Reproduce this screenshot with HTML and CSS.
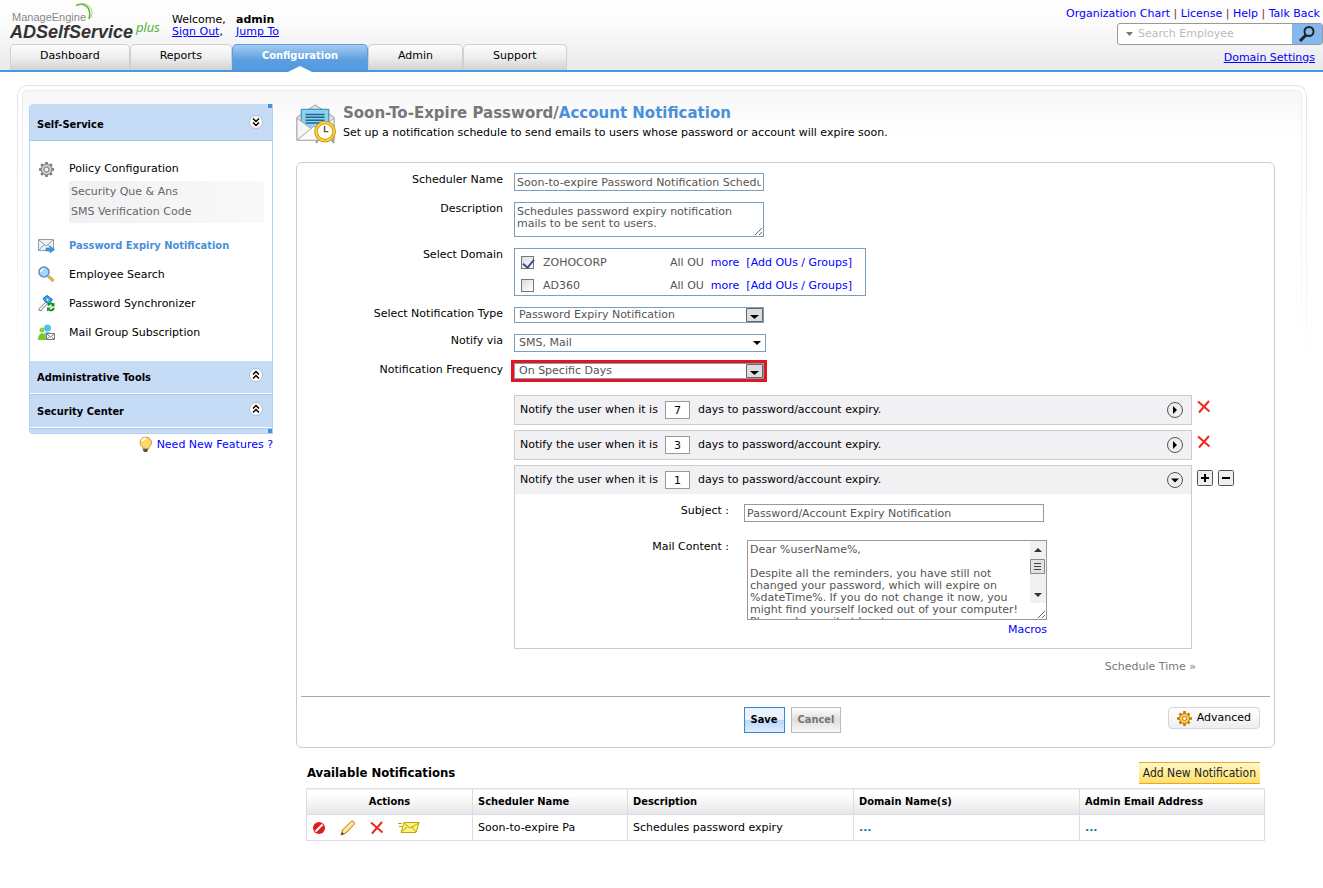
FILE: index.html
```html
<!DOCTYPE html>
<html lang="en">
<head>
    <meta charset="UTF-8">
    <meta name="viewport" content="width=device-width, initial-scale=1.0">
    <title>ADSelfService Plus</title>
    <link rel="stylesheet" href="styles.css">
</head>
<body>
    <header class="header">
        <div class="header-left">
            <div class="brand-row">
                <div class="logo">
                    <svg class="logo-swoosh" width="20" height="18" viewBox="0 0 20 18" fill="none" stroke="#5cb531"><path d="M1 2.500C9-1 17 4 14 16" stroke-width="1.500"/><path d="M5 1C13-1 20 6 15.500 15" stroke="#9bd37c"/></svg>
                    <span class="logo-company">ManageEngine</span>
                    <span class="logo-product">ADSelfService</span>
                    <span class="logo-plus">plus</span>
                </div>
                <div class="welcome">
                    <span>Welcome,</span><b>admin</b>
                    <span><a href="#">Sign Out</a>,</span><a href="#">Jump To</a>
                </div>
            </div>
            <nav class="tabs">
                <a class="tab" href="#">Dashboard</a>
                <a class="tab" href="#">Reports</a>
                <a class="tab active" href="#">Configuration</a>
                <a class="tab" href="#">Admin</a>
                <a class="tab" href="#">Support</a>
            </nav>
        </div>
        <div class="header-right">
            <div class="top-links">
                <a href="#">Organization Chart</a> | <a href="#">License</a> | <a href="#">Help</a> | <a href="#">Talk Back</a>
            </div>
            <form class="search">
                <svg width="7" height="5" viewBox="0 0 7 5"><path d="M0 0h7L3.500 4z" fill="#777"/></svg>
                <input type="text" placeholder="Search Employee" aria-label="Search Employee">
                <button type="button" aria-label="Search">
                    <svg width="18" height="18" viewBox="0 0 18 18" fill="none" stroke="#222"><circle cx="11" cy="6.500" r="4.500" stroke-width="2"/><path d="M8 10L2 16" stroke-width="3"/></svg>
                </button>
            </form>
            <a class="domain-settings" href="#">Domain Settings</a>
        </div>
    </header>

    <div class="shell">
        <aside class="sidebar">
            <div class="side-box">
                <div class="side-head first">Self-Service
                    <button class="round-toggle" aria-label="Collapse"><svg width="14" height="14" viewBox="0 0 14 14"><circle cx="7" cy="7" r="6.500" fill="#fff" stroke="#b5bcc5"/><path d="M4 3.500l3 3 3-3M4 7.500l3 3 3-3" fill="none" stroke="#000" stroke-width="1.500"/></svg></button>
                </div>
                <div class="side-body">
                    <a class="side-item policy" href="#">
                        <svg width="17" height="17" viewBox="0 0 17 17"><path d="M8.500 1v15M1 8.500h15M3.200 3.200l10.600 10.600M13.800 3.200L3.200 13.800" stroke="#777" stroke-width="2.500"/><circle cx="8.500" cy="8.500" r="5.500" fill="#ccc" stroke="#777"/><circle cx="8.500" cy="8.500" r="2.500" fill="#eee" stroke="#777"/></svg>
                        Policy Configuration
                    </a>
                    <div class="side-sub">
                        <a href="#">Security Que &amp; Ans</a>
                        <a href="#">SMS Verification Code</a>
                    </div>
                    <a class="side-item selected" href="#">
                        <svg width="17" height="17" viewBox="0 0 17 17"><path d="M.5 2.500h15v11H.5z" fill="#edf1f5" stroke="#8d9dac"/><path d="M1 3l7 6 7-6M1 13l5-5M15 13l-5-5" fill="none" stroke="#8d9dac"/><path d="M8 11h4V9l4.500 3.500L12 16v-2H8z" fill="#3f9be0" stroke="#276fb0" stroke-width=".5"/></svg>
                        Password Expiry Notification
                    </a>
                    <a class="side-item" href="#">
                        <svg width="17" height="17" viewBox="0 0 17 17"><path d="M10 10l5.500 5" stroke="#d98b2c" stroke-width="3"/><path d="M10 10l5.500 5" stroke="#ffd27a"/><circle cx="6" cy="6" r="5" fill="#a8d4f7" stroke="#5a8fc4" stroke-width="1.500"/><path d="M3 6c0-2 1.500-3 3-3" fill="none" stroke="#fff" stroke-width="1.500"/></svg>
                        Employee Search
                    </a>
                    <a class="side-item" href="#">
                        <svg width="17" height="17" viewBox="0 0 17 17"><path d="M8 7l-7 6.500v2h2.500l1-2 5-4.500" fill="#eee" stroke="#888"/><path d="M5 3.500L9 .5l5.500 4L11 9 7.500 7z" fill="#39a4e2" stroke="#1a6da8"/><path d="M8.500 3l2.500 2-2 1z" fill="#fff"/><path d="M10 10.500c1.500-3 4.500-2.500 5.500-.5M16 13c-1.500 3-4.500 3-6 1" fill="none" stroke="#14901f" stroke-width="2"/><path d="M16.500 7.500v4h-4zM9 12.500h4l-4 4z" fill="#14901f"/></svg>
                        Password Synchronizer
                    </a>
                    <a class="side-item" href="#">
                        <svg width="17" height="17" viewBox="0 0 17 17"><circle cx="9.500" cy="4" r="3.500" fill="#56bfe6"/><path d="M5 13c0-7 9-7 9 0z" fill="#71cdef"/><circle cx="4" cy="6" r="2.500" fill="#8bd038"/><path d="M0 16c0-9 8-9 8 0z" fill="#7cc62c"/><path d="M8.500 9.500h8v6h-8z" fill="#fff" stroke="#777"/><path d="M9 10l3.500 3 3.500-3M9 15l2.500-2M16 15l-2.500-2" fill="none" stroke="#777"/></svg>
                        Mail Group Subscription
                    </a>
                </div>
                <div class="side-head">Administrative Tools
                    <button class="round-toggle" aria-label="Expand"><svg width="14" height="14" viewBox="0 0 14 14"><circle cx="7" cy="7" r="6.500" fill="#fff" stroke="#b5bcc5"/><path d="M4 6.500l3-3 3 3M4 10.500l3-3 3 3" fill="none" stroke="#000" stroke-width="1.500"/></svg></button>
                </div>
                <div class="side-head">Security Center
                    <button class="round-toggle" aria-label="Expand"><svg width="14" height="14" viewBox="0 0 14 14"><circle cx="7" cy="7" r="6.500" fill="#fff" stroke="#b5bcc5"/><path d="M4 6.500l3-3 3 3M4 10.500l3-3 3 3" fill="none" stroke="#000" stroke-width="1.500"/></svg></button>
                </div>
                <div class="side-foot"></div>
            </div>
            <a class="need-features" href="#">
                <svg width="15" height="17" viewBox="0 0 15 17"><path d="M7.500 1a6 5.500 0 0 1 3.500 10v1.500H4.500V11A6 5.500 0 0 1 7.500 1z" fill="#ffd768" stroke="#d69a3a"/><path d="M4 5c1-2 2-2.500 4-2.500" fill="none" stroke="#fff" stroke-width="2"/><path d="M5 13h5v1l-1 2H6l-1-2z" fill="#555"/></svg>
                Need New Features ?
            </a>
        </aside>

        <main class="main">
            <div class="page-title">
                <svg width="40" height="40" viewBox="0 0 42 42">
                    <path d="M1 14L20 1l20 13v24H1z" fill="#e4e4e6" stroke="#999"/>
                    <path d="M5.500 5.500h29v24h-29z" fill="#8fd0f2" stroke="#2e80ad"/>
                    <path d="M10 11h20M10 14h20M10 17h20M10 20h17" stroke="#1f6793" stroke-width="1.500"/>
                    <path d="M1 15l15 11L1 38zM40 15L25 26l15 12z" fill="#f5f5f6" stroke="#aaa"/>
                    <path d="M1 38l17-14h5l17 14z" fill="#fbfbfb" stroke="#aaa"/>
                    <circle cx="30.500" cy="29" r="9.500" fill="#fffdf4" stroke="#b88a12" stroke-width="3.500"/>
                    <circle cx="30.500" cy="29" r="9.500" fill="none" stroke="#ffd52e" stroke-width="2"/>
                    <path d="M30 23v6h4" fill="none" stroke="#555" stroke-width="1.500"/>
                    <path d="M23 38l-2 3M38 38l2 3" stroke="#999" stroke-width="2"/>
                </svg>
                <div>
                    <h1>Soon-To-Expire Password/<span>Account Notification</span></h1>
                    <p>Set up a notification schedule to send emails to users whose password or account will expire soon.</p>
                </div>
            </div>

            <form class="panel">
                <div class="fields">
                    <label for="name">Scheduler Name</label>
                    <input class="field" id="name" type="text" value="Soon-to-expire Password Notification Scheduler">

                    <label for="desc">Description</label>
                    <textarea class="field desc" id="desc">Schedules password expiry notification mails to be sent to users.</textarea>

                    <span class="label">Select Domain</span>
                    <div class="domains">
                        <div class="domain">
                            <input type="checkbox" id="zoho" checked><label for="zoho">ZOHOCORP</label>
                            <span>All OU</span><a href="#">more</a><a href="#">[Add OUs / Groups]</a>
                        </div>
                        <div class="domain">
                            <input type="checkbox" id="ad360"><label for="ad360">AD360</label>
                            <span>All OU</span><a href="#">more</a><a href="#">[Add OUs / Groups]</a>
                        </div>
                    </div>

                    <label for="type">Select Notification Type</label>
                    <div class="select">
                        <select id="type"><option>Password Expiry Notification</option></select>
                        <svg width="17" height="14" viewBox="0 0 17 14"><path d="M.5.5h16v13H.5z" fill="#ddd" stroke="#666"/><path d="M4 7h9l-4.500 4z"/></svg>
                    </div>

                    <label for="via">Notify via</label>
                    <div class="select via">
                        <select id="via"><option>SMS, Mail</option></select>
                        <svg width="15" height="16" viewBox="0 0 15 16"><path d="M3 6h8l-4 4z"/></svg>
                    </div>

                    <label for="freq">Notification Frequency</label>
                    <div class="select marked">
                        <select id="freq"><option>On Specific Days</option></select>
                        <svg width="17" height="14" viewBox="0 0 17 14"><path d="M.5.5h16v13H.5z" fill="#ddd" stroke="#666"/><path d="M4 7h9l-4.500 4z"/></svg>
                    </div>
                </div>

                <div class="rules">
                    <div class="rule">
                        <div class="rule-head">
                            <label for="d7">Notify the user when it is</label><input id="d7" type="text" value="7"><span>days to password/account expiry.</span>
                            <button type="button" aria-label="Expand"><svg width="16" height="16" viewBox="0 0 16 16"><circle cx="8" cy="8" r="7.500" fill="#eee" stroke="#555"/><path d="M6 4v8l4-4z"/></svg></button>
                        </div>
                        <div class="rule-actions">
                            <button type="button" aria-label="Delete"><svg width="14" height="14" viewBox="0 0 14 14"><path d="M1 1.500l11.500 10M12 1L2 12.500" stroke="#ee2a20" stroke-width="2"/></svg></button>
                        </div>
                    </div>
                    <div class="rule">
                        <div class="rule-head">
                            <label for="d3">Notify the user when it is</label><input id="d3" type="text" value="3"><span>days to password/account expiry.</span>
                            <button type="button" aria-label="Expand"><svg width="16" height="16" viewBox="0 0 16 16"><circle cx="8" cy="8" r="7.500" fill="#eee" stroke="#555"/><path d="M6 4v8l4-4z"/></svg></button>
                        </div>
                        <div class="rule-actions">
                            <button type="button" aria-label="Delete"><svg width="14" height="14" viewBox="0 0 14 14"><path d="M1 1.500l11.500 10M12 1L2 12.500" stroke="#ee2a20" stroke-width="2"/></svg></button>
                        </div>
                    </div>
                    <div class="rule">
                        <div class="rule-open">
                            <div class="rule-head">
                                <label for="d1">Notify the user when it is</label><input id="d1" type="text" value="1"><span>days to password/account expiry.</span>
                                <button type="button" aria-label="Collapse"><svg width="16" height="16" viewBox="0 0 16 16"><circle cx="8" cy="8" r="7.500" fill="#eee" stroke="#555"/><path d="M4 6.500h8l-4 4z"/></svg></button>
                            </div>
                            <div class="mail">
                                <label for="subject">Subject :</label>
                                <input class="field" id="subject" type="text" value="Password/Account Expiry Notification">
                                <label for="content">Mail Content :</label>
                                <div class="mail-content">
                                    <div class="mail-text">
                                        <textarea class="field" id="content">Dear %userName%,

Despite all the reminders, you have still not changed your password, which will expire on %dateTime%. If you do not change it now, you might find yourself locked out of your computer!
Please change it at least now.</textarea>
                                        <svg class="scrollbar" width="16" height="62" viewBox="0 0 16 62"><path d="M0 0h16v62H0z" fill="#f0f0f3"/><path d="M4 11h8l-4-4zM4 52h8l-4 4z" fill="#333"/><path d="M.5 18.500h14v14H.5z" fill="#e2e2e4" stroke="#888"/><path d="M4 22.500h7M4 25.500h7M4 28.500h7" stroke="#444"/></svg>
                                    </div>
                                    <a href="#">Macros</a>
                                </div>
                            </div>
                        </div>
                        <div class="rule-actions">
                            <button type="button" aria-label="Add"><svg width="16" height="16" viewBox="0 0 16 16"><rect x=".5" y=".5" width="15" height="15" rx="1" fill="#eee" stroke="#555"/><path d="M4 8h8M8 4v8" stroke="#000" stroke-width="2"/></svg></button>
                            <button type="button" aria-label="Remove"><svg width="16" height="16" viewBox="0 0 16 16"><rect x=".5" y=".5" width="15" height="15" rx="1" fill="#eee" stroke="#555"/><path d="M4 8h8" stroke="#000" stroke-width="2"/></svg></button>
                        </div>
                    </div>
                </div>
                <a class="schedule-time" href="#">Schedule Time »</a>

                <div class="panel-foot">
                    <div class="buttons">
                        <button class="btn save" type="button">Save</button>
                        <button class="btn" type="button">Cancel</button>
                    </div>
                    <button class="advanced" type="button">
                        <svg width="15" height="15" viewBox="0 0 15 15"><path d="M7.500 0v15M0 7.500h15M2.500 2.500l10 10M12.500 2.500l-10 10" stroke="#b8780e" stroke-width="2.500"/><circle cx="7.500" cy="7.500" r="5" fill="#ffcf4a" stroke="#b8780e"/><circle cx="7.500" cy="7.500" r="2" fill="#fff" stroke="#b8780e"/></svg>
                        Advanced
                    </button>
                </div>
            </form>

            <section class="available">
                <div class="available-head">
                    <h2>Available Notifications</h2>
                    <button class="add-new">Add New Notification</button>
                </div>
                <table>
                    <thead>
                        <tr>
                            <th class="col-actions">Actions</th>
                            <th class="col-name">Scheduler Name</th>
                            <th class="col-wide">Description</th>
                            <th class="col-wide">Domain Name(s)</th>
                            <th>Admin Email Address</th>
                        </tr>
                    </thead>
                    <tbody>
                        <tr>
                            <td>
                                <div class="row-actions">
                                    <button aria-label="Disable"><svg width="14" height="14" viewBox="0 0 14 14"><circle cx="7" cy="7" r="6" fill="#e01b1b"/><path d="M3.500 10.500l7-7" stroke="#fff" stroke-width="2"/></svg></button>
                                    <button aria-label="Edit"><svg width="16" height="16" viewBox="0 0 16 16"><path d="M1 15l1.500-5L11 1.500c2-1.500 4.500 1 3 3L6 13z" fill="#ffdf80" stroke="#a87a2a"/><path d="M4 11l8-8" stroke="#fff6c8"/><path d="M1 15l1-3 2 2z" fill="#444"/></svg></button>
                                    <button aria-label="Delete"><svg width="14" height="14" viewBox="0 0 14 14"><path d="M1 1.500l11.500 10M12 1L2 12.500" stroke="#ee2a20" stroke-width="2"/></svg></button>
                                    <button aria-label="Send mail"><svg width="22" height="13" viewBox="0 0 22 13"><path d="M6 1.500h15l-3 10H3z" fill="#fff27c" stroke="#b7a700"/><path d="M6 2l6 5 9-5M3 11l6-5M18 11l-4-5" fill="none" stroke="#b7a700"/><path d="M0 2.500h4M1 5.500h3" stroke="#b7a700"/></svg></button>
                                </div>
                            </td>
                            <td>Soon-to-expire Pa</td>
                            <td>Schedules password expiry</td>
                            <td><a href="#">...</a></td>
                            <td><a href="#">...</a></td>
                        </tr>
                    </tbody>
                </table>
            </section>
        </main>
    </div>
</body>
</html>
```
FILE: styles.css
```css
* {
    box-sizing: border-box;
}
body {
    margin: 0;
    font-family: "DejaVu Sans", Verdana, sans-serif;
    font-size: 11px;
    line-height: 14px;
    color: #000;
    background-color: #fff;
}
a {
    color: #0000ff;
    text-decoration: none;
}
input, select, textarea, button {
    font: inherit;
    color: #555;
    margin: 0;
}
button {
    padding: 0;
    border: none;
    background: none;
    cursor: pointer;
}
svg {
    display: block;
    flex: none;
}

/* header */
.header {
    display: flex;
    justify-content: space-between;
    height: 72px;
    border-bottom: 2px solid #4a97dd;
    background: linear-gradient(#fff, #fafafb 40%, #e9e9eb);
}
.header-left {
    display: flex;
    flex-direction: column;
    justify-content: space-between;
    padding-left: 10px;
}
.brand-row {
    display: flex;
    gap: 13px;
}
.logo {
    position: relative;
    display: grid;
    grid-template-columns: auto 1fr;
    align-items: end;
    width: 149px;
    padding-top: 10px;
    font-family: "Liberation Sans", Arial, sans-serif;
}
.logo-swoosh {
    position: absolute;
    left: 65px;
    top: 3px;
}
.logo-company {
    grid-column: 1 / 3;
    padding-left: 2px;
    color: #888;
}
.logo-product {
    font-size: 18px;
    line-height: 16px;
    font-weight: bold;
    font-style: italic;
    color: #333;
}
.logo-plus {
    font-family: "Open Sans", sans-serif;
    font-style: italic;
    font-size: 13px;
    line-height: 26px;
    margin-top: -10px;
    padding-left: 3px;
    color: #4cae2c;
}
.welcome {
    display: grid;
    grid-template-columns: 64px auto;
    align-content: start;
    line-height: 12px;
    padding-top: 14px;
}
.welcome a {
    text-decoration: underline;
}
.tabs {
    display: flex;
}
.tab {
    height: 26px;
    padding: 0 29px;
    line-height: 22px;
    color: #000;
    border: 1px solid #d0d0d2;
    border-bottom: none;
    border-radius: 5px 5px 0 0;
    background: linear-gradient(#fdfdfd, #eee 50%, #d2d2d4);
}
.tab.active {
    position: relative;
    color: #fff;
    font-family: "DejaVu Sans Condensed", "DejaVu Sans", sans-serif;
    font-weight: bold;
    border-color: #5b9fe0;
    background: linear-gradient(#a5cbf0, #5b9fe0 60%, #5499de);
}
.tab.active::after {
    content: "";
    position: absolute;
    left: 50%;
    bottom: -2px;
    margin-left: -12px;
    border: 12px solid transparent;
    border-top: none;
    border-bottom: 6px solid #fff;
}
.header-right {
    display: flex;
    flex-direction: column;
    align-items: flex-end;
    padding-top: 7px;
}
.top-links {
    padding-right: 3px;
    color: #733;
}
.search {
    display: flex;
    align-items: center;
    width: 206px;
    height: 22px;
    margin-top: 2px;
    padding-left: 8px;
    border: 1px solid #999;
    border-radius: 3px;
    background-color: #fff;
}
.search input {
    flex: 1;
    min-width: 0;
    padding: 0 5px;
    border: none;
    outline: none;
}
.search input::placeholder {
    color: #bbb;
}
.search button {
    display: flex;
    align-items: center;
    justify-content: center;
    width: 30px;
    height: 20px;
    background-color: #85b8ee;
}
.domain-settings {
    margin: 6px 8px 0 0;
    text-decoration: underline;
}

/* page frame, fades out towards the bottom */
.shell {
    position: relative;
    display: flex;
    align-items: flex-start;
    gap: 23px;
    margin: 13px 16px 0 17px;
    padding: 19px 32px 40px 12px;
}
.shell::before {
    content: "";
    position: absolute;
    inset: 0 0 auto 0;
    height: 300px;
    z-index: -1;
    border: 1px solid #e2e2e8;
    border-bottom: none;
    border-radius: 10px 10px 0 0;
    box-shadow: inset 0 0 0 4px #fff, inset 0 0 0 5px #ececf0;
    background: linear-gradient(#f6f6f8, #fff 50px);
    mask-image: linear-gradient(#000, transparent);
}

/* sidebar */
.sidebar {
    width: 244px;
    flex: none;
}
.side-box {
    border: 1px solid #b3d0f0;
    border-radius: 4px 0 0 4px;
    border-top: none;
    background-color: #fff;
}
.side-head {
    display: flex;
    justify-content: space-between;
    height: 34px;
    padding: 10px 9px 0 7px;
    font-family: "DejaVu Sans Condensed", "DejaVu Sans", sans-serif;
    font-weight: bold;
    background-color: #c6dcf6;
    border-bottom: 1px solid #a5cbe8;
    box-shadow: inset 0 -1px #fff;
}
.side-head.first {
    height: 37px;
    padding-top: 14px;
    border-radius: 4px 0 0 0;
    background: linear-gradient(#4a90d9, #4a90d9) top right / 4px 4px no-repeat #c6dcf6;
    box-shadow: none;
}
.round-toggle {
    height: 14px;
    margin-top: -3px;
}
.side-body {
    padding: 16px 8px 14px;
}
.side-item {
    display: flex;
    align-items: center;
    gap: 14px;
    height: 29px;
    color: #000;
}
.side-item.policy {
    height: 24px;
}
.side-item.selected {
    margin-top: 8px;
    color: #4a90d9;
    font-family: "DejaVu Sans Condensed", "DejaVu Sans", sans-serif;
    font-weight: bold;
}
.side-sub {
    display: flex;
    flex-direction: column;
    margin-left: 31px;
    padding: 1px 2px;
    line-height: 20px;
    background: linear-gradient(90deg, #f1f1f3, #f9f9fa);
}
.side-sub a {
    color: #666;
}
.side-foot {
    height: 4px;
    background: linear-gradient(#4a90d9, #4a90d9) right / 4px 4px no-repeat #c6dcf6;
}
.need-features {
    display: flex;
    align-items: center;
    justify-content: flex-end;
    gap: 4px;
    padding-top: 2px;
}

/* page title */
.main {
    flex: 1;
    min-width: 0;
}
.page-title {
    display: flex;
    gap: 7px;
    height: 58px;
}
h1 {
    margin: 0;
    font-size: 15px;
    line-height: 18px;
    color: #777;
}
h1 span {
    color: #4a90d9;
}
.page-title p {
    margin: 4px 0 0;
}

/* form */
.panel {
    display: flex;
    flex-direction: column;
    padding: 10px 4px 14px;
    border: 1px solid #ccc;
    border-radius: 6px;
    background-color: #fff;
}
.fields {
    display: grid;
    grid-template-columns: 202px auto;
    justify-content: start;
    gap: 11px;
}
.fields > label, .fields > .label {
    text-align: right;
}
.field {
    width: 250px;
    height: 18px;
    padding: 0 2px;
    border: 1px solid #7b9ebd;
    border-radius: 0;
    background-color: #fff;
}
textarea.field {
    display: block;
    height: 35px;
    padding: 3px 2px;
    line-height: 12px;
    overflow: hidden;
}
.domains {
    width: 352px;
    height: 48px;
    padding: 2px 6px 0;
    border: 1px solid #7b9ebd;
}
.domain {
    display: flex;
    align-items: center;
    gap: 7px;
    height: 23px;
    color: #555;
}
.domain label {
    width: 120px;
    margin-left: 2px;
}
.domain input {
    width: 13px;
    height: 13px;
    appearance: none;
    border: 1px solid #777;
    background: linear-gradient(135deg, #ddd, #fff);
}
.domain input:checked::before {
    content: "";
    display: block;
    width: 5px;
    height: 9px;
    margin-left: 3px;
    border: solid #3c4f8c;
    border-width: 0 2px 2px 0;
    transform: rotate(40deg);
}
.select {
    position: relative;
    width: 250px;
    height: 16px;
}
.select select {
    display: block;
    width: 100%;
    height: 100%;
    padding: 0 4px;
    appearance: none;
    border: 1px solid #7b9ebd;
    border-radius: 0;
    background-color: #fff;
}
.select svg {
    position: absolute;
    top: 1px;
    right: 1px;
    pointer-events: none;
}
.select.via {
    width: 252px;
    height: 18px;
}
.select.marked {
    outline: 3px solid #e8141c;
}

/* notification rules */
.rules {
    display: flex;
    flex-direction: column;
    gap: 5px;
    margin: 16px 0 0 213px;
}
.rule {
    display: flex;
}
.rule-head {
    flex: 1;
    display: flex;
    align-items: center;
    height: 30px;
    padding: 0 8px 0 5px;
    border: 1px solid #ccc;
    background-color: #f1f1f4;
}
.rule-head input {
    width: 25px;
    height: 18px;
    margin: 0 8px 0 7px;
    padding: 0;
    text-align: center;
    color: #000;
    border: 1px solid #999;
    background-color: #fff;
}
.rule-head button {
    margin-left: auto;
}
.rule-open {
    flex: 1;
    border: 1px solid #ccc;
}
.rule-open .rule-head {
    height: 28px;
    border: none;
}
.rule-actions {
    display: flex;
    align-items: flex-start;
    gap: 5px;
    width: 78px;
    padding: 5px 0 0 5px;
}
.mail {
    display: grid;
    grid-template-columns: 214px auto;
    justify-content: start;
    gap: 18px 15px;
    padding: 10px 0 11px;
}
.mail > label {
    text-align: right;
}
.mail .field {
    width: 300px;
    border-color: #999;
}
.mail-content {
    display: flex;
    flex-direction: column;
    align-items: flex-end;
    gap: 3px;
    padding-left: 3px;
}
.mail-text {
    position: relative;
}
.mail-text textarea.field {
    height: 80px;
    padding-right: 18px;
}
.scrollbar {
    position: absolute;
    top: 1px;
    right: 1px;
}
.schedule-time {
    align-self: flex-end;
    margin: 11px 74px 22px 0;
    color: #777;
}
.panel-foot {
    display: grid;
    grid-template-columns: 1fr auto 1fr;
    align-items: start;
    padding: 10px 10px 0 24px;
    border-top: 1px solid #aaa;
}
.buttons {
    grid-column: 2;
    display: flex;
    gap: 6px;
}
.btn {
    height: 26px;
    padding: 0 6px;
    font-family: "DejaVu Sans Condensed", "DejaVu Sans", sans-serif;
    font-weight: bold;
    color: #777;
    border: 1px solid #bbb;
    background: linear-gradient(#fff, #dedee0 50%, #f8f8f8);
}
.btn.save {
    color: #000;
    border-color: #3b86d0;
    background: linear-gradient(#e8f3ff 50%, #b9d7f7 50%, #dcecff);
}
.advanced {
    display: flex;
    align-items: center;
    justify-self: end;
    gap: 5px;
    height: 22px;
    padding: 0 8px;
    color: #000;
    border: 1px solid #d5d5d8;
    border-radius: 4px;
    background: linear-gradient(#fff, #eeeef0);
}

/* list of saved notifications */
.available {
    padding: 14px 10px 0;
}
.available-head {
    display: flex;
    align-items: flex-start;
    justify-content: space-between;
    height: 26px;
    padding: 0 5px 0 1px;
}
h2 {
    margin: 4px 0 0;
    font-size: 13px;
    line-height: 14px;
    font-family: "DejaVu Sans Condensed", "DejaVu Sans", sans-serif;
}
.add-new {
    height: 22px;
    padding: 0 4px;
    color: #222;
    font-family: "DejaVu Sans Condensed", "DejaVu Sans", sans-serif;
    font-size: 12px;
    border: solid #e8a52c;
    border-width: 1px 0;
    background: linear-gradient(#fff8c8, #ffe066);
}
table {
    width: 100%;
    table-layout: fixed;
    border-collapse: collapse;
}
th, td {
    height: 26px;
    padding: 0 5px;
    text-align: left;
    border: 1px solid #dcdce2;
}
th {
    font-family: "DejaVu Sans Condensed", "DejaVu Sans", sans-serif;
    border-bottom: none;
    background: linear-gradient(#fff 20%, #e6e6e8);
}
td a {
    color: #1473a8;
    font-weight: bold;
}
.col-actions {
    width: 166px;
    text-align: center;
}
.col-name {
    width: 155px;
}
.col-wide {
    width: 226px;
}
.row-actions {
    display: flex;
    align-items: center;
    gap: 14px;
}
```
